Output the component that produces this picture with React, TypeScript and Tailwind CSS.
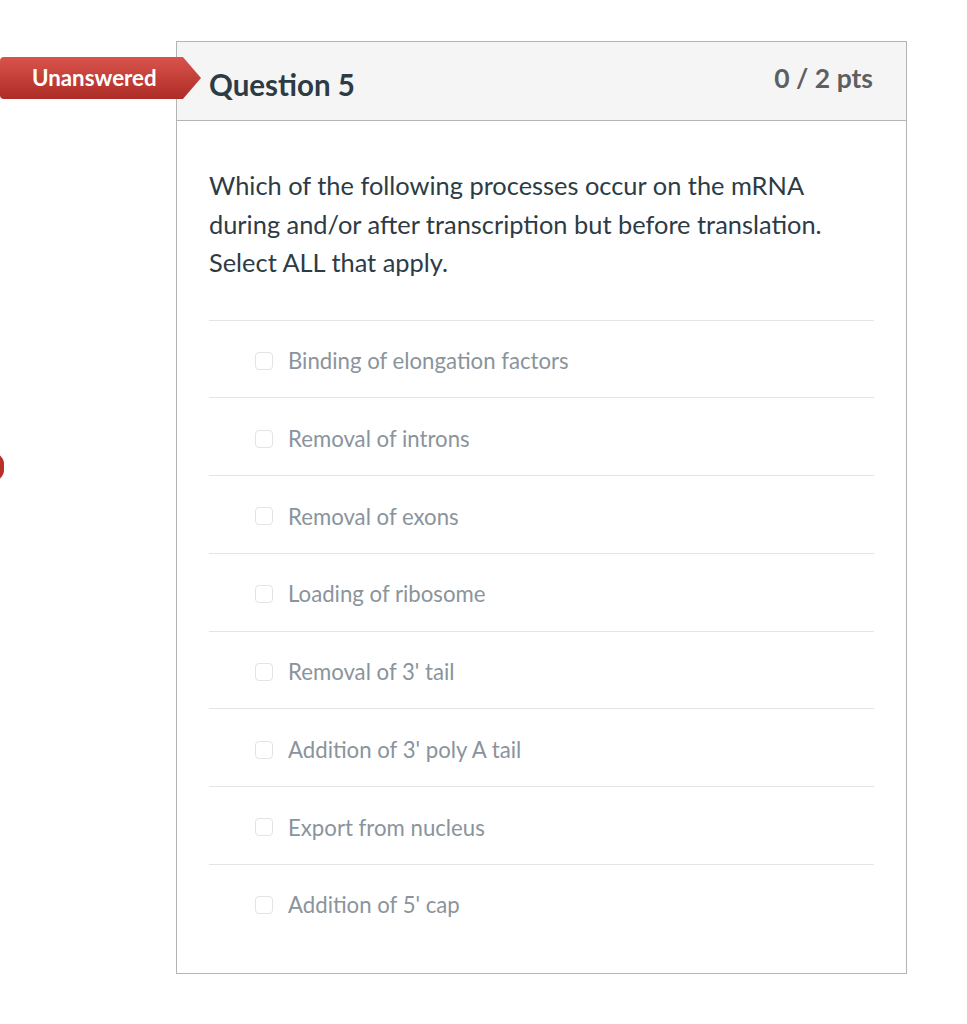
const options = [
  "Binding of elongation factors",
  "Removal of introns",
  "Removal of exons",
  "Loading of ribosome",
  "Removal of 3' tail",
  "Addition of 3' poly A tail",
  "Export from nucleus",
  "Addition of 5' cap",
];

export default function App() {
  return (
    <div className="relative min-h-screen bg-white pt-[41px] pl-[176px] font-['Lato',sans-serif]">
      {/* stray marker at the left edge */}
      <div className="absolute left-[-18px] top-[453px] w-[22px] h-[28px] rounded-full bg-[#b8302a]"></div>

      <div className="relative w-[731px] border border-[#b4b4b4] bg-white">
        {/* Unanswered flag */}
        <div className="absolute left-[-177px] top-[15px] z-10 flex h-[42px] w-[201px] items-center rounded-l-[4px] bg-gradient-to-b from-[#d9534b] to-[#ad2c26] pl-[32px] [clip-path:polygon(0_0,91%_0,100%_50%,91%_100%,0_100%)]">
          <span className="text-[22.3px] font-bold text-white leading-none">Unanswered</span>
        </div>

        <div className="flex h-[79px] items-start justify-between border-b border-[#b4b4b4] bg-[#f5f5f5] pl-[32px] pr-[33px]">
          <h2 className="pt-[26px] text-[29.5px] font-bold leading-[34px] text-[#2d3b45]">Question 5</h2>
          <span className="pt-[19px] text-[26.5px] font-bold leading-[34px] text-[#5f5f5f]">0 / 2 pts</span>
        </div>

        <div className="px-[32px] pt-[45px] pb-[31px]">
          <p className="text-[25.4px] leading-[38.5px] text-[#2d3b45]">
            Which of the following processes occur on the mRNA during and/or after transcription but before translation. Select ALL that apply.
          </p>
          <div className="mt-[38px]">
            {options.map((o) => (
              <label key={o} className="flex h-[77.75px] items-center border-t border-[#e4e4e4] pl-[46px] pt-[4px]">
                <span className="mr-[15px] h-[18px] w-[18px] rounded-[4px] border border-[#e3e3e3] bg-white"></span>
                <span className="text-[22.2px] text-[#8a949c]">{o}</span>
              </label>
            ))}
          </div>
        </div>
      </div>
    </div>
  );
}
